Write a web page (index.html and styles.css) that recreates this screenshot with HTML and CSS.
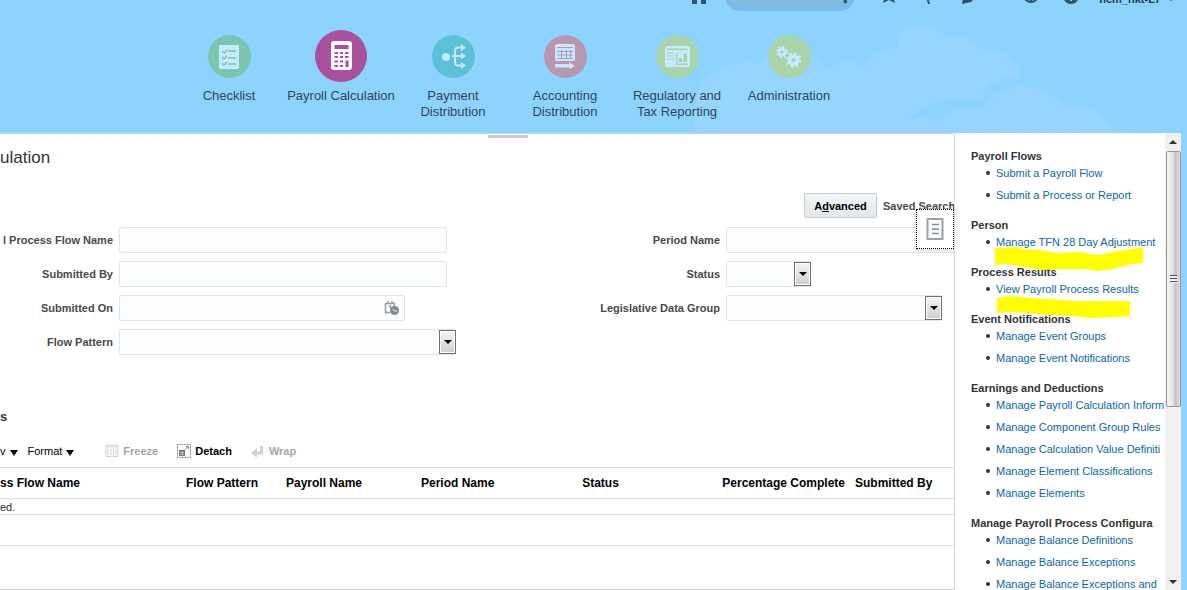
FILE: index.html
```html
<!DOCTYPE html>
<html lang="en">
<head>
  <meta charset="UTF-8">
  <meta name="viewport" content="width=device-width, initial-scale=1.0">
  <title>Payroll Calculation</title>
  <link rel="stylesheet" href="styles.css">
</head>
<body>
  <header class="header">
    <svg class="clouds" width="436" height="109" viewBox="0 0 436 109" aria-hidden="true">
      <path fill="#96d5ff" d="M15 109C13 86 15 68 25 56C40 40 62 36 80 40C92 24 112 22 131 31C142 38 146 48 149 45C160 34 176 36 182 43C192 30 206 24 217 24C216 8 228 0 243 1C252 2 260 7 265 13C280 8 296 18 302 25C322 25 340 38 341 54C316 52 304 62 302 77C280 72 250 74 230 94C240 93 250 93 257 99C265 88 285 80 303 87C312 66 335 58 358 65C372 69 380 78 384 83C408 78 428 92 434 109Z"/>
    </svg>

    <div class="topbar">
      <a class="top-link home" href="#" aria-label="Home"><svg width="16" height="16" viewBox="0 0 16 16"><path d="M8 0L16 7H15V16H10V10H6V16H1V7H0Z"/></svg></a>
      <div class="search">
        <input type="text" aria-label="Search">
        <svg width="16" height="16" viewBox="0 0 16 16"><circle cx="6" cy="4" r="5" fill="none" stroke="#2e5468" stroke-width="2"/><path d="M8 8L11 15" stroke="#2e5468" stroke-width="3"/></svg>
      </div>
      <div class="top-icons">
        <a class="top-link" href="#" aria-label="Favorites"><svg width="16" height="16" viewBox="0 0 16 16"><path d="M8 0L10 6H16L12 9L14 15L8 12L2 15L4 9L0 6H6Z"/></svg></a>
        <a class="top-link" href="#" aria-label="Watchlist"><svg width="16" height="16" viewBox="0 0 16 16"><path d="M5 0H15L13 7L7 8L9 16H7L3 2Z"/></svg></a>
        <a class="top-link" href="#" aria-label="Edit"><svg width="18" height="16" viewBox="0 0 18 16"><path d="M12 0L18 6L10 14L1 16L2 10Z"/></svg></a>
        <a class="top-link wide" href="#" aria-label="Accessibility"><svg width="16" height="16" viewBox="0 0 16 16"><circle cx="8" cy="7" r="8"/><path d="M6 13V9H10V13" stroke="#8cd3ff" fill="none"/></svg></a>
        <a class="top-link" href="#" aria-label="Help"><svg width="16" height="16" viewBox="0 0 16 16"><circle cx="8" cy="8" r="8"/><path d="M8 11V13" stroke="#8cd3ff" stroke-width="2"/></svg></a>
      </div>
      <button class="user" type="button">hcm_hkt-L7 <span class="caret"></span></button>
    </div>

    <nav class="tabs">
      <a class="tab" href="#">
        <svg class="tab-icon" width="52" height="52" viewBox="0 0 52 52">
          <circle cx="26.500" cy="26.500" r="21.500" fill="#79c5ae"/>
          <rect x="16" y="15" width="20" height="24" rx="1" fill="#c5e9ff"/>
          <path d="M19 21L21 23L24 20M19 27L21 29L24 26M19 33L21 35L24 32M25 21H33M25 28H33M25 34H33" fill="none" stroke="#79c5ae" stroke-width="1.5"/>
        </svg>
        Checklist
      </a>
      <a class="tab" href="#">
        <svg class="tab-icon" width="52" height="52" viewBox="0 0 52 52">
          <circle cx="26" cy="26" r="26" fill="#a9519c"/>
          <rect x="16" y="11" width="21" height="29" rx="3" fill="#fff"/>
          <path d="M19.500 15H33.500V19H19.500ZM19.500 22H23V24H19.500ZM25 22H28V24H25ZM30 22H33.500V24H30ZM19.500 26H23V28H19.500ZM25 26H28V28H25ZM30 26H33.500V28H30ZM19.500 30.500H23V32.500H19.500ZM25 30.500H28V32.500H25ZM19.500 35H23V37H19.500ZM25 35H28V37H25ZM30.500 30.500H33.500V37H30.500Z" fill="#a9519c"/>
        </svg>
        Payroll Calculation
      </a>
      <a class="tab" href="#">
        <svg class="tab-icon" width="52" height="52" viewBox="0 0 52 52">
          <circle cx="26.500" cy="26.500" r="21.500" fill="#5bc1d8"/>
          <circle cx="19" cy="27" r="4" fill="#c5e9ff"/>
          <path d="M25 26H35M35 17.500H31Q28 17.500 28 21V31Q28 35.500 31 35.500H35" fill="none" stroke="#c5e9ff" stroke-width="2"/>
          <path d="M34 14L39 17.500L34 21ZM34 22.500L39 26L34 29.500ZM34 32L39 35.500L34 39Z" fill="#c5e9ff"/>
        </svg>
        Payment<br>Distribution
      </a>
      <a class="tab" href="#">
        <svg class="tab-icon" width="52" height="52" viewBox="0 0 52 52">
          <circle cx="26.500" cy="26.500" r="21.500" fill="#b996b0"/>
          <rect x="16" y="14" width="20" height="17" rx="2" fill="#c5e9ff"/>
          <path d="M18 17.500H34M18 21.500H34M18 25H34M18 28.500H34M22.500 20V28.500M27.500 20V28.500M31.500 20V28.500" stroke="#b996b0"/>
          <path d="M16 34H30V32L36 36L30 39V37.500H16Z" fill="#c5e9ff"/>
        </svg>
        Accounting<br>Distribution
      </a>
      <a class="tab" href="#">
        <svg class="tab-icon" width="52" height="52" viewBox="0 0 52 52">
          <circle cx="26.500" cy="26.500" r="21.500" fill="#a9d3a9"/>
          <rect x="14" y="16" width="25" height="21" rx="2" fill="#c5e9ff"/>
          <path d="M16 18.500H37V20H16ZM16 22.500H23V23.500H16ZM16 25.500H23V26.500H16ZM16 28.500H23V29.500H16ZM25 23H26.500V33.500H37V35H25ZM28 28H31V32H28ZM32.500 24H36V32H32.500Z" fill="#a9d3a9"/>
        </svg>
        Regulatory and<br>Tax Reporting
      </a>
      <a class="tab" href="#">
        <svg class="tab-icon" width="52" height="52" viewBox="0 0 52 52">
          <circle cx="26.500" cy="26.500" r="21.500" fill="#a9d3a9"/>
          <g fill="none" stroke="#c5e9ff">
            <circle cx="19" cy="22" r="3" stroke-width="3"/>
            <circle cx="19" cy="22" r="5" stroke-width="2" stroke-dasharray="2 1.930"/>
            <circle cx="30.500" cy="30" r="4" stroke-width="4"/>
            <circle cx="30.500" cy="30" r="6.500" stroke-width="2.500" stroke-dasharray="2.550 2.550"/>
          </g>
        </svg>
        Administration
      </a>
    </nav>
  </header>

  <div class="page">
    <main class="content">
      <div class="grip"></div>
      <h1 class="title">ulation</h1>

      <div class="search-bar">
        <button class="advanced" type="button">A<u>d</u>vanced</button>
        <span class="saved">Saved Search</span>
      </div>
      <button class="panel-toggle" type="button" aria-label="Tasks">
        <svg width="18" height="24" viewBox="0 0 18 24"><rect x="1.500" y="2" width="15" height="20" fill="none" stroke="#9aa0a5" stroke-width="2"/><path d="M6 7.500H13M6 12H13M6 16.500H13" stroke="#858b91" stroke-width="1.500"/></svg>
      </button>

      <form class="filters">
        <div class="fields left">
          <label for="flowName">l Process Flow Name</label>
          <div class="field"><input id="flowName" type="text"></div>
          <label for="submittedBy">Submitted By</label>
          <div class="field"><input id="submittedBy" type="text"></div>
          <label for="submittedOn">Submitted On</label>
          <div class="field date">
            <input id="submittedOn" type="text">
            <svg class="date-icon" width="16" height="16" viewBox="0 0 16 16"><path d="M1.500 3V12.500H6M1 3.500H11M4 1V4M8 1V4M10.500 3V6M5 6H6.500V9" fill="none" stroke="#9a9da0" stroke-width="1.500"/><circle cx="10.500" cy="10.500" r="4.500" fill="#85888b"/><path d="M8.500 9L10.500 11H13" fill="none" stroke="#fff"/></svg>
          </div>
          <label for="flowPattern">Flow Pattern</label>
          <div class="field drop"><select id="flowPattern"><option></option></select><span class="arrow"></span></div>
        </div>
        <div class="fields right">
          <label for="periodName">Period Name</label>
          <div class="field"><input id="periodName" type="text"></div>
          <label for="status">Status</label>
          <div class="field drop small"><select id="status"><option></option></select><span class="arrow"></span></div>
          <label for="dataGroup">Legislative Data Group</label>
          <div class="field drop medium"><select id="dataGroup"><option></option></select><span class="arrow"></span></div>
        </div>
      </form>

      <h2 class="results-title">s</h2>
      <div class="toolbar">
        <button class="menu" type="button">v <span class="caret"></span></button>
        <button class="menu format" type="button">Format <span class="caret"></span></button>
        <button class="tool" type="button" disabled>
          <svg width="14" height="14" viewBox="0 0 14 14"><path d="M1 1.500H13V12.500H1ZM1 3H13M3 5V11M6 5V11M8.500 5V11M11 5V11" fill="none" stroke="#d0d2d3"/></svg>
          Freeze
        </button>
        <button class="tool" type="button">
          <svg width="14" height="14" viewBox="0 0 14 14"><rect x=".5" y=".5" width="13" height="13" fill="none" stroke="#85898c" stroke-dasharray="2 1"/><path d="M2 6H8V12H2Z" fill="#777b7e"/><path d="M3 8.500H7M3 10.500H7M5 7V11" stroke="#ddd" stroke-width=".6"/><path d="M8 5.500L11 2.500M9 2.500H11.500V5" fill="none" stroke="#85898c"/></svg>
          Detach
        </button>
        <button class="tool" type="button" disabled>
          <svg width="14" height="14" viewBox="0 0 14 14"><path d="M10.500 2V9H5" fill="none" stroke="#cfd3d5" stroke-width="3"/><path d="M0 9L6 4V14Z" fill="#cfd3d5"/></svg>
          Wrap
        </button>
      </div>

      <table class="results">
        <colgroup><col class="c-name"><col class="c-flow"><col class="c-payroll"><col class="c-period"><col class="c-status"><col class="c-percent"><col></colgroup>
        <thead>
          <tr><th>ss Flow Name</th><th>Flow Pattern</th><th>Payroll Name</th><th>Period Name</th><th class="center">Status</th><th class="end">Percentage Complete</th><th>Submitted By</th></tr>
        </thead>
        <tbody>
          <tr><td colspan="7">ed.</td></tr>
        </tbody>
      </table>
      <div class="table-footer"></div>
      <div class="table-end"></div>
    </main>

    <aside class="tasks">
      <div class="task-list">
        <h3>Payroll Flows</h3>
        <ul>
          <li><a href="#">Submit a Payroll Flow</a></li>
          <li><a href="#">Submit a Process or Report</a></li>
        </ul>
        <h3>Person</h3>
        <ul>
          <li class="marked"><a href="#">Manage TFN 28 Day Adjustment</a>
            <svg class="marker" width="148" height="25" viewBox="0 0 148 25"><path fill="#ff0" d="M0 1L22 0L28 2L44 3L62 6L83 5L103 8L118 5L137 2L148 0V16L132 18L118 22L103 24L90 22L65 22L48 23L30 20L10 17L0 18Z"/></svg>
          </li>
        </ul>
        <h3>Process Results</h3>
        <ul>
          <li class="marked"><a href="#">View Payroll Process Results</a>
            <svg class="marker" width="148" height="25" viewBox="0 0 148 25"><path fill="#ff0" d="M2 4L15 2L34 4L53 5L80 7H135V22L120 23L95 24L80 22L53 21L34 19L15 18L2 19Z"/></svg>
          </li>
        </ul>
        <h3>Event Notifications</h3>
        <ul>
          <li><a href="#">Manage Event Groups</a></li>
          <li><a href="#">Manage Event Notifications</a></li>
        </ul>
        <h3>Earnings and Deductions</h3>
        <ul>
          <li><a href="#">Manage Payroll Calculation Inform</a></li>
          <li><a href="#">Manage Component Group Rules</a></li>
          <li><a href="#">Manage Calculation Value Definiti</a></li>
          <li><a href="#">Manage Element Classifications</a></li>
          <li><a href="#">Manage Elements</a></li>
        </ul>
        <h3>Manage Payroll Process Configura</h3>
        <ul>
          <li><a href="#">Manage Balance Definitions</a></li>
          <li><a href="#">Manage Balance Exceptions</a></li>
          <li><a href="#">Manage Balance Exceptions and</a></li>
        </ul>
      </div>
      <div class="scrollbar">
        <span class="scroll-up"></span>
        <div class="thumb"><span class="ridges"></span></div>
        <span class="scroll-down"></span>
      </div>
    </aside>
  </div>
</body>
</html>
```

FILE: styles.css
```css
* {
  box-sizing: border-box;
}

body {
  margin: 0;
  height: 100vh;
  display: flex;
  flex-direction: column;
  overflow: hidden;
  background-color: #8cd3ff;
  font-family: "Liberation Sans", Arial, sans-serif;
  font-size: 11px;
  color: #333;
}

button, input, select {
  font-family: inherit;
  font-size: inherit;
}

button {
  border: none;
  background: none;
  padding: 0;
  cursor: pointer;
}

a {
  text-decoration: none;
}

/* Header */
.header {
  position: relative;
  flex: none;
  height: 133px;
}

.clouds {
  position: absolute;
  right: 71px;
  bottom: 0;
}

.topbar {
  position: relative;
  display: flex;
  align-items: flex-end;
  justify-content: flex-end;
  height: 11px;
  padding-right: 12px;
}

.top-link {
  display: block;
  flex: none;
  width: 16px;
  height: 23px;
  fill: #2e5468;
}

.home {
  margin-right: 18px;
}

.search {
  display: flex;
  flex: none;
  align-items: center;
  width: 130px;
  height: 30px;
  padding-right: 4px;
  border-radius: 15px;
  background-color: #7dbbe2;
}

.search input {
  flex: 1;
  min-width: 0;
  border: none;
  outline: none;
  background: none;
}

.top-icons {
  display: flex;
  gap: 24px;
  margin: 0 20px 0 26px;
}

.top-icons .wide {
  margin-left: 22px;
}

.user {
  display: flex;
  align-items: center;
  gap: 6px;
  height: 24px;
  color: #1c3947;
  font-weight: bold;
}

.caret {
  border: 4px solid transparent;
  border-top: 6px solid #000;
  border-bottom: none;
}

.user .caret {
  border-top: 4px solid #1c3947;
}

.tabs {
  position: relative;
  display: flex;
  justify-content: center;
  padding: 19px 169px 0 0;
}

.tab {
  width: 112px;
  font-size: 13px;
  line-height: 16px;
  text-align: center;
  color: #2c4858;
}

.tab-icon {
  display: block;
  margin: 0 auto 6px;
}

/* Main area */
.page {
  flex: 1;
  display: flex;
  min-height: 0;
  padding-right: 6px;
}

.content {
  position: relative;
  flex: 1;
  min-width: 0;
  overflow: hidden;
  background-color: #fff;
  border-top: 1px solid #c9d3dc;
  border-right: 1px solid #d5dde3;
}

.grip {
  width: 40px;
  height: 3px;
  margin: 1px 426px 0 auto;
  background-color: #c9cbdc;
}

.title {
  margin: 9px 0 0;
  font-size: 17px;
  font-weight: normal;
  line-height: 22px;
}

.search-bar {
  display: flex;
  justify-content: flex-end;
  align-items: center;
  gap: 6px;
  margin-top: 24px;
  font-size: 12px;
  font-weight: bold;
}

.advanced {
  width: 73px;
  height: 25px;
  border: 1px solid #c0ccd6;
  border-radius: 2px;
  background: linear-gradient(#f3f5f7, #e2e6ea);
  color: #000;
  font-size: 11px;
  font-weight: bold;
}

.saved {
  flex: none;
  width: 71px;
  color: #4a4a4a;
  font-size: 11px;
  white-space: nowrap;
}

.panel-toggle {
  position: absolute;
  top: 75px;
  right: 0;
  z-index: 1;
  display: flex;
  align-items: center;
  justify-content: center;
  width: 38px;
  height: 40px;
  border: 1px dotted #000;
  background-color: #fff;
  box-shadow: -1px 2px 2px #dde1e5;
}

.filters {
  display: grid;
  grid-template-columns: minmax(0, 1fr) minmax(0, 1fr);
  margin-top: 9px;
}

.fields {
  display: grid;
  grid-template-columns: 113px 328px;
  grid-auto-rows: 26px;
  align-content: start;
  align-items: center;
  column-gap: 6px;
  row-gap: 8px;
}

.fields.right {
  grid-template-columns: 243px 328px;
}

.fields label {
  color: #4a4a4a;
  font-weight: bold;
  text-align: right;
  white-space: nowrap;
}

.field {
  position: relative;
  height: 26px;
}

.field input, .field select {
  display: block;
  width: 100%;
  height: 100%;
  padding: 0 4px;
  border: 1px solid #dfe4e7;
  border-radius: 2px;
  background-color: #fcfdff;
  appearance: none;
}

.date {
  width: 286px;
}

.date-icon {
  position: absolute;
  right: 5px;
  top: 5px;
}

.drop {
  width: 337px;
}

.drop.small {
  width: 85px;
}

.drop.medium {
  width: 216px;
}

.arrow {
  position: absolute;
  top: 1px;
  right: 0;
  display: flex;
  align-items: center;
  justify-content: center;
  width: 17px;
  height: 24px;
  border: 1px solid #707070;
  box-shadow: inset 0 0 0 1px #fff;
  background: linear-gradient(#f4f4f4, #cfcfcf);
  pointer-events: none;
}

.arrow::after {
  content: "";
  border: 4px solid transparent;
  border-top-color: #000;
  border-bottom: none;
}

/* Results */
.results-title {
  margin: 54px 0 0;
  font-size: 13px;
  line-height: 16px;
}

.toolbar {
  display: flex;
  align-items: center;
  height: 20px;
  margin: 16px 0 6px;
}

.menu {
  display: flex;
  align-items: center;
  gap: 4px;
  margin-right: 10px;
  color: #000;
}

.menu .caret {
  margin-top: 3px;
}

.format {
  margin-right: 31px;
}

.tool {
  display: flex;
  align-items: center;
  gap: 4px;
  margin-right: 19px;
  color: #000;
  font-size: 11px;
  font-weight: bold;
}

.tool:disabled {
  color: #a5a5a5;
}

.results {
  width: 100%;
  table-layout: fixed;
  border-collapse: collapse;
}

.c-name { width: 181px; }
.c-flow { width: 100px; }
.c-payroll { width: 135px; }
.c-period { width: 135px; }
.c-status { width: 99px; }
.c-percent { width: 200px; }

.results th {
  height: 31px;
  padding: 0 5px;
  border-top: 1px solid #d3dee6;
  border-bottom: 1px solid #d3dee6;
  color: #000;
  font-size: 12px;
  text-align: left;
  white-space: nowrap;
}

.results th:first-child {
  padding-left: 0;
}

.results .center {
  text-align: center;
}

.results .end {
  text-align: right;
}

.results td {
  height: 16px;
  padding: 0;
  line-height: 14px;
  border-bottom: 1px solid #d3dee6;
}

.table-footer {
  height: 31px;
  border-bottom: 1px solid #d3dee6;
}

.table-end {
  height: 44px;
  border-bottom: 1px solid #ccc;
}

/* Tasks panel */
.tasks {
  flex: none;
  display: flex;
  width: 226px;
  background-color: #fff;
}

.task-list {
  flex: 1;
  min-width: 0;
  overflow: hidden;
  padding: 16px 0 0 16px;
  white-space: nowrap;
  line-height: 14px;
}

.task-list h3 {
  margin: 0 0 3px;
  font-size: 11px;
  line-height: 14px;
}

.task-list ul {
  margin: 0 0 16px;
  padding-left: 15px;
  list-style: none;
}

.task-list li {
  display: flex;
  align-items: center;
  gap: 6px;
  height: 14px;
  margin-bottom: 8px;
}

.task-list li::before {
  content: "";
  flex: none;
  width: 4px;
  height: 4px;
  border-radius: 50%;
  background-color: #333;
}

.task-list li:last-child {
  margin-bottom: 0;
}

.task-list a {
  color: #0b66a8;
}

/* highlighter strokes lie over the text */
.marked {
  position: relative;
}

.marker {
  position: absolute;
  top: 12px;
  left: 9px;
}

.scrollbar {
  display: flex;
  flex-direction: column;
  align-items: center;
  width: 16px;
  background-color: #f0f0f0;
}

.scroll-up, .scroll-down {
  flex: none;
  border: 4px solid transparent;
}

.scroll-up {
  margin: 3px 0 7px;
  border-bottom-color: #333;
}

.scroll-down {
  margin: auto 0 2px;
  border-top-color: #333;
}

.thumb {
  display: flex;
  align-items: center;
  justify-content: center;
  width: 15px;
  height: 56%;
  border: 1px solid #979797;
  border-radius: 2px;
  background: linear-gradient(to right, #f5f5f5, #e5e5e5 45%, #c4c4c8 60%, #dcdcdc);
}

.ridges {
  width: 7px;
  height: 8px;
  background: repeating-linear-gradient(#555 0 1px, #eee 1px 3px);
}
```
